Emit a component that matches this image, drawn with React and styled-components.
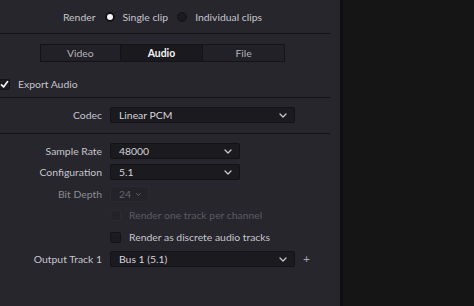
import React from "react";
import styled, { createGlobalStyle } from "styled-components";

const Global = createGlobalStyle`
  html, body { margin: 0; padding: 0; background: #151515; }
  body { font-family: "Lato", "Open Sans", sans-serif; }
  #root { width: 474px; height: 306px; overflow: hidden; }
`;

const Frame = styled.div`
  display: flex;
  width: 474px;
  height: 306px;
`;

const Panel = styled.div`
  width: 340px;
  flex: none;
  background: #27262d;
  border-right: 3px solid #0f0f11;
  display: flex;
  flex-direction: column;
  color: #c9c8ce;
  font-size: 10.4px;
`;

const Side = styled.div`
  flex: 1;
  background: #151515;
`;

const Section = styled.div`
  width: 330px;
  height: ${(p) => p.$h}px;
  box-sizing: border-box;
  border-bottom: ${(p) => (p.$line ? "1px solid #131217" : "none")};
  display: flex;
  flex-direction: column;
  padding-top: ${(p) => p.$pt || 0}px;
`;

const RenderRow = styled.div`
  width: 325px;
  height: 33px;
  display: flex;
  align-items: center;
  justify-content: center;
`;

const Text = styled.span`
  color: ${(p) => (p.$dim ? "#5c5b63" : "#c6c5cb")};
  white-space: nowrap;
  margin-right: ${(p) => p.$mr || 0}px;
`;

const Radio = styled.span`
  width: 10px;
  height: 10px;
  border-radius: 50%;
  box-sizing: border-box;
  margin-right: 8px;
  background: ${(p) => (p.$on ? "#111014" : "#1b1a1f")};
  border: 1px solid #141317;
  display: flex;
  align-items: center;
  justify-content: center;
  &::after {
    content: "";
    width: 6px;
    height: 6px;
    border-radius: 50%;
    background: ${(p) => (p.$on ? "#f4f4f6" : "transparent")};
  }
`;

const Tabs = styled.div`
  margin: 10px 0 0 40px;
  width: 245px;
  height: 18px;
  display: flex;
  box-sizing: border-box;
  border: 1px solid #141317;
  background: #222127;
`;

const Tab = styled.div`
  flex: ${(p) => p.$w};
  display: flex;
  align-items: center;
  justify-content: center;
  color: ${(p) => (p.$on ? "#f2f2f4" : "#b4b3b9")};
  font-weight: ${(p) => (p.$on ? 700 : 400)};
  background: ${(p) => (p.$on ? "#1a191e" : "transparent")};
  border-left: ${(p) => (p.$first ? "none" : "1px solid #141317")};
`;

const ExportRow = styled.div`
  margin-top: 16px;
  margin-left: -1px;
  height: 12px;
  display: flex;
  align-items: center;
  gap: 8px;
`;

const Check = styled.span`
  width: 11px;
  height: 11px;
  flex: none;
  box-sizing: border-box;
  border-radius: 2px;
  background: ${(p) => (p.$dim ? "#242329" : "#1c1b20")};
  border: 1px solid ${(p) => (p.$dim ? "#2c2b31" : "#141317")};
  display: flex;
  align-items: center;
  justify-content: center;
`;

const Row = styled.div`
  display: grid;
  grid-template-columns: 102px auto auto;
  justify-content: start;
  column-gap: 8px;
  align-items: center;
  height: 16px;
  margin-top: ${(p) => p.$mt || 0}px;
`;

const Label = styled.span`
  text-align: right;
  color: ${(p) => (p.$dim ? "#8d8c93" : "#c6c5cb")};
  white-space: nowrap;
`;

const Select = styled.div`
  width: ${(p) => p.$w}px;
  height: 16px;
  box-sizing: border-box;
  display: flex;
  align-items: center;
  justify-content: ${(p) => (p.$tight ? "flex-start" : "space-between")};
  gap: 5px;
  padding: 0 7px 0 8px;
  background: ${(p) => (p.$dim ? "#242329" : "#1b1a1f")};
  border: 1px solid ${(p) => (p.$dim ? "#2b2a30" : "#131216")};
  border-radius: 2px;
  color: ${(p) => (p.$dim ? "#66656c" : "#d6d5da")};
`;

const CheckRow = styled.div`
  display: flex;
  align-items: center;
  gap: 8px;
  margin-left: 110px;
  height: 12px;
  margin-top: ${(p) => p.$mt || 0}px;
`;

const Plus = styled.span`
  color: #a9a8ae;
  font-size: 12px;
  line-height: 1;
`;

const Chevron = ({ dim }) => (
  <svg width="8" height="5" viewBox="0 0 8 5">
    <path
      d="M1 1 L4 4 L7 1"
      fill="none"
      stroke={dim ? "#75747b" : "#c9c8ce"}
      strokeWidth="1.3"
      strokeLinecap="round"
      strokeLinejoin="round"
    />
  </svg>
);

const Tick = () => (
  <svg width="9" height="9" viewBox="0 0 9 9">
    <path
      d="M1.5 4.8 L3.6 7 L7.6 1.6"
      fill="none"
      stroke="#f5f5f7"
      strokeWidth="1.7"
      strokeLinecap="round"
      strokeLinejoin="round"
    />
  </svg>
);

export default function App() {
  return (
    <>
      <Global />
      <Frame>
        <Panel>
          <Section $h={34} $line>
            <RenderRow>
              <Text $mr={9}>Render</Text>
              <Radio $on />
              <Text $mr={9}>Single clip</Text>
              <Radio />
              <Text>Individual clips</Text>
            </RenderRow>
          </Section>
          <Section $h={64} $line>
            <Tabs>
              <Tab $w={80} $first>Video</Tab>
              <Tab $w={83} $on>Audio</Tab>
              <Tab $w={82}>File</Tab>
            </Tabs>
            <ExportRow>
              <Check>
                <Tick />
              </Check>
              <Text>Export Audio</Text>
            </ExportRow>
          </Section>
          <Section $h={36} $line $pt={9}>
            <Row>
              <Label>Codec</Label>
              <Select $w={185}>
                <span>Linear PCM</span>
                <Chevron />
              </Select>
            </Row>
          </Section>
          <Section $h={172} $pt={9}>
            <Row>
              <Label>Sample Rate</Label>
              <Select $w={130}>
                <span>48000</span>
                <Chevron />
              </Select>
            </Row>
            <Row $mt={5}>
              <Label>Configuration</Label>
              <Select $w={130}>
                <span>5.1</span>
                <Chevron />
              </Select>
            </Row>
            <Row $mt={6}>
              <Label $dim>Bit Depth</Label>
              <Select $w={39} $dim $tight>
                <span>24</span>
                <Chevron dim />
              </Select>
            </Row>
            <CheckRow $mt={7}>
              <Check $dim />
              <Text $dim>Render one track per channel</Text>
            </CheckRow>
            <CheckRow $mt={10}>
              <Check />
              <Text>Render as discrete audio tracks</Text>
            </CheckRow>
            <Row $mt={8}>
              <Label>Output Track 1</Label>
              <Select $w={185}>
                <span>Bus 1 (5.1)</span>
                <Chevron />
              </Select>
              <Plus>+</Plus>
            </Row>
          </Section>
        </Panel>
        <Side />
      </Frame>
    </>
  );
}
